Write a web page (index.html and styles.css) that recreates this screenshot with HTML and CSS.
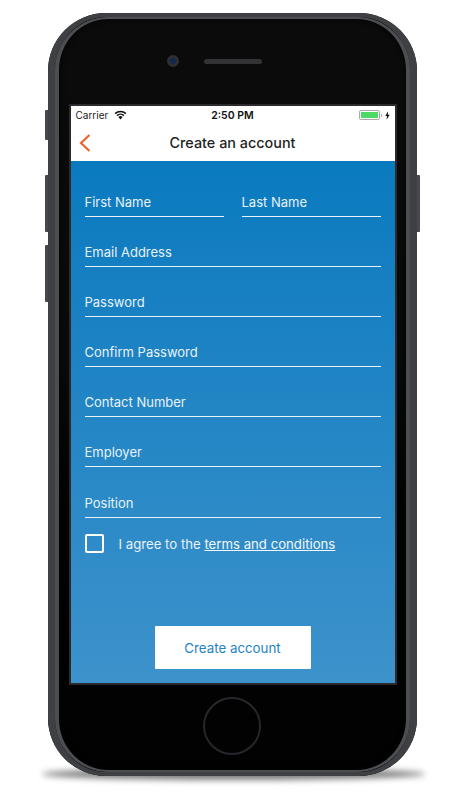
FILE: index.html
```html
<!DOCTYPE html>
<html lang="en">
<head>
<meta charset="utf-8">
<title>Create an account</title>
<link rel="stylesheet" href="styles.css">
</head>
<body>
<div class="phone">
  <span class="floor-shadow"></span>
  <span class="side side-mute"></span>
  <span class="side side-up"></span>
  <span class="side side-down"></span>
  <span class="side side-power"></span>
  <div class="body">
    <div class="top-bezel">
      <span class="camera"></span>
      <span class="speaker"></span>
    </div>
    <div class="screen">
      <div class="status">
        <div class="status-left">
          <span>Carrier</span>
          <svg class="wifi" viewBox="0 0 14 10" width="13" height="10"><path d="M7 9.800 4.700 7.200a3.300 3.300 0 0 1 4.600 0z" fill="#111"/><path d="M3.300 5.700a5.400 5.400 0 0 1 7.400 0M1.200 3.500a8.500 8.500 0 0 1 11.600 0" fill="none" stroke="#111" stroke-width="1.700"/></svg>
        </div>
        <span class="time">2:50 PM</span>
        <div class="status-right">
          <span class="battery"><span class="battery-fill"></span></span>
          <span class="battery-cap"></span>
          <svg class="bolt" viewBox="0 0 6 10" width="5" height="9"><path d="M3.6 0 0.4 5.6h2L1.800 10 5.600 4H3.400z" fill="#111"/></svg>
        </div>
      </div>
      <header class="nav">
        <svg class="back" viewBox="0 0 12 18" width="12" height="18"><path d="M10.500 1 2 9l8.500 8" fill="none" stroke="#f0622d" stroke-width="2.200"/></svg>
        <h1 class="title">Create an account</h1>
      </header>
      <main class="form">
        <div class="field-row">
          <div class="field">First Name</div>
          <div class="field">Last Name</div>
        </div>
        <div class="field">Email Address</div>
        <div class="field">Password</div>
        <div class="field">Confirm Password</div>
        <div class="field">Contact Number</div>
        <div class="field">Employer</div>
        <div class="field field-last">Position</div>
        <div class="agree">
          <span class="checkbox"></span>
          <span>I agree to the <a class="terms">terms and conditions</a></span>
        </div>
        <button class="submit">Create account</button>
      </main>
    </div>
    <div class="bottom-bezel">
      <span class="home"></span>
    </div>
  </div>
</div>
</body>
</html>
```
FILE: styles.css
```css
html, body { margin: 0; padding: 0; background: #fff; }
body {
  width: 475px;
  height: 800px;
  overflow: hidden;
  font-family: Inter, "Liberation Sans", sans-serif;
}
.phone {
  position: relative;
  width: 369px;
  height: 763px;
  margin: 13px 0 0 48px;
}
.body {
  position: relative;
  box-sizing: border-box;
  width: 369px;
  height: 763px;
  border-radius: 58px;
  background: linear-gradient(#0b0b0c, #0a0a0b 45%, #020203 65%);
  display: flex;
  flex-direction: column;
  align-items: center;
}
.body::before {
  content: "";
  position: absolute;
  inset: 0;
  border-style: solid;
  border-width: 4px 7px;
  border-color: #3f4044;
  border-radius: 58px;
}
.body::after {
  content: "";
  position: absolute;
  inset: 4px 7px;
  border-style: solid;
  border-width: 2px 4px;
  border-color: #4d4e52;
  border-radius: 53px;
  box-shadow: inset 0 0 5px 1px #050505;
}
.floor-shadow {
  position: absolute;
  left: -6px;
  top: 755px;
  width: 383px;
  height: 12px;
  border-radius: 50%;
  background: #7a7a7a;
  filter: blur(3px);
}
.side {
  position: absolute;
  width: 3px;
  background: #47484d;
  border-radius: 1px 0 0 1px;
}
.side-mute { left: -3px; top: 97px; height: 30px; }
.side-up { left: -3px; top: 162px; height: 57px; }
.side-down { left: -3px; top: 232px; height: 57px; }
.side-power { left: 369px; top: 162px; height: 57px; border-radius: 0 1px 1px 0; }
.top-bezel {
  position: relative;
  width: 100%;
  height: 91px;
  flex: none;
}
.camera {
  position: absolute;
  left: 119px;
  top: 42px;
  width: 12px;
  height: 12px;
  box-sizing: border-box;
  border-radius: 50%;
  border: 3px solid #2e2f33;
  background: #13294f;
}
.speaker {
  position: absolute;
  left: 156px;
  top: 46px;
  width: 58px;
  height: 5px;
  border-radius: 3px;
  background: #333336;
}
.screen {
  box-sizing: border-box;
  width: 328px;
  height: 581px;
  flex: none;
  border: 2px solid #2b2b2d;
  background: #fff;
  display: flex;
  flex-direction: column;
}
.status {
  height: 18px;
  flex: none;
  padding: 0 5px;
  display: grid;
  grid-template-columns: 1fr auto 1fr;
  align-items: center;
  font-size: 10px;
  color: #222;
}
.status-left { display: flex; align-items: center; gap: 6px; }
.time { font-weight: 600; color: #111; font-size: 10.500px; }
.status-right { display: flex; align-items: center; justify-content: flex-end; }
.wifi { display: block; }
.battery {
  box-sizing: border-box;
  display: block;
  width: 21px;
  height: 10px;
  border: 1px solid #a9a9a9;
  border-radius: 2px;
  padding: 1px;
}
.battery-fill { display: block; height: 100%; background: #4cd964; }
.battery-cap { display: block; width: 1px; height: 3px; margin: 0 3px 0 1px; background: #a9a9a9; }
.bolt { display: block; }
.nav {
  height: 37px;
  flex: none;
  padding-left: 8px;
  display: flex;
  align-items: center;
  background: #fff;
}
.back { display: block; flex: none; }
.title {
  margin: 0 0 0 79px;
  font-size: 14.400px;
  font-weight: 500;
  color: #1f1f1f;
  white-space: nowrap;
}
.form {
  flex: 1;
  padding: 0 14px;
  color: #fff;
  display: flex;
  flex-direction: column;
  background: linear-gradient(#0a7abf, #3d92cb);
}
.field {
  box-sizing: border-box;
  height: 50px;
  padding-bottom: 6px;
  display: flex;
  align-items: flex-end;
  font-size: 13px;
  line-height: 16px;
  color: #e8f2f9;
  border-bottom: 1px solid #e8f2f9;
  flex: none;
}
.field-last { height: 51px; }
.field-row { display: flex; gap: 18px; height: 56px; flex: none; }
.field-row .field { flex: 1; height: 56px; }
.agree {
  margin-top: 16px;
  display: flex;
  align-items: center;
  gap: 15px;
  font-size: 13.200px;
  color: #e8f2f9;
}
.checkbox {
  box-sizing: border-box;
  width: 19px;
  height: 19px;
  border: 2px solid #fff;
  border-radius: 2px;
  flex: none;
}
.terms { text-decoration: underline; color: #f2f8fc; }
.submit {
  align-self: center;
  margin-top: 73px;
  width: 156px;
  height: 43px;
  border: 0;
  border-radius: 1px;
  background: #fff;
  color: #1e82c4;
  font-family: inherit;
  font-size: 13.300px;
}
.bottom-bezel {
  flex: 1;
  width: 100%;
  display: flex;
  justify-content: center;
  padding: 12px 2px 0 0;
  box-sizing: border-box;
}
.home {
  box-sizing: border-box;
  width: 58px;
  height: 58px;
  border-radius: 50%;
  border: 2px solid #26272b;
}
```
